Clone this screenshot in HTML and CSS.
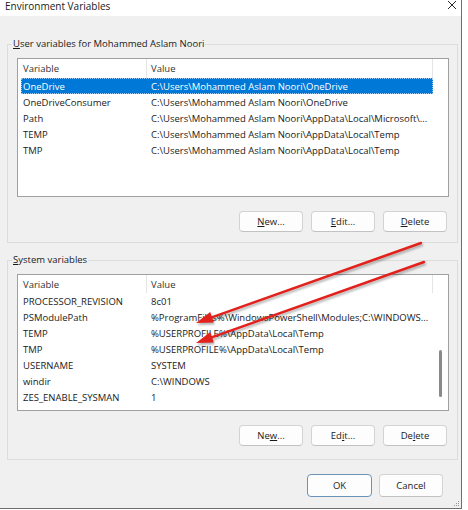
FILE: index.html
```html
<!DOCTYPE html>
<html>
<head>
<meta charset="utf-8">
<link rel="stylesheet" href="styles.css">
</head>
<body>
<div class="window">
  <div class="titlebar">
    <span class="title">Environment Variables</span>
    <svg class="close" viewBox="0 0 10 10" width="10" height="10"><path d="M1 1 L9 9 M9 1 L1 9" stroke="#2a2a2a" stroke-width="1" fill="none"/></svg>
  </div>
  <div class="client">
    <fieldset class="group group-user">
      <legend><u>U</u>ser variables for Mohammed Aslam Noori</legend>
      <div class="list list-user">
        <div class="rows">
          <div class="row head"><span class="c1">Variable</span><span class="c2">Value</span></div>
          <div class="row sel"><span class="c1">OneDrive</span><span class="c2">C:\Users\Mohammed Aslam Noori\OneDrive</span></div>
          <div class="row"><span class="c1">OneDriveConsumer</span><span class="c2">C:\Users\Mohammed Aslam Noori\OneDrive</span></div>
          <div class="row"><span class="c1">Path</span><span class="c2">C:\Users\Mohammed Aslam Noori\AppData\Local\Microsoft\...</span></div>
          <div class="row"><span class="c1">TEMP</span><span class="c2">C:\Users\Mohammed Aslam Noori\AppData\Local\Temp</span></div>
          <div class="row"><span class="c1">TMP</span><span class="c2">C:\Users\Mohammed Aslam Noori\AppData\Local\Temp</span></div>
        </div>
      </div>
      <div class="btns">
        <button class="btn"><u>N</u>ew...</button>
        <button class="btn"><u>E</u>dit...</button>
        <button class="btn"><u>D</u>elete</button>
      </div>
    </fieldset>
    <fieldset class="group group-sys">
      <legend><u>S</u>ystem variables</legend>
      <div class="list list-sys">
        <div class="rows">
          <div class="row head"><span class="c1">Variable</span><span class="c2">Value</span></div>
          <div class="row"><span class="c1">PROCESSOR_REVISION</span><span class="c2">8c01</span></div>
          <div class="row"><span class="c1">PSModulePath</span><span class="c2">%ProgramFiles%\WindowsPowerShell\Modules;C:\WINDOWS...</span></div>
          <div class="row"><span class="c1">TEMP</span><span class="c2">%USERPROFILE%\AppData\Local\Temp</span></div>
          <div class="row"><span class="c1">TMP</span><span class="c2">%USERPROFILE%\AppData\Local\Temp</span></div>
          <div class="row"><span class="c1">USERNAME</span><span class="c2">SYSTEM</span></div>
          <div class="row"><span class="c1">windir</span><span class="c2">C:\WINDOWS</span></div>
          <div class="row"><span class="c1">ZES_ENABLE_SYSMAN</span><span class="c2">1</span></div>
        </div>
        <div class="scroll"><div class="thumb"></div></div>
      </div>
      <div class="btns">
        <button class="btn">Ne<u>w</u>...</button>
        <button class="btn">Ed<u>i</u>t...</button>
        <button class="btn">De<u>l</u>ete</button>
      </div>
    </fieldset>
    <div class="footer">
      <button class="btn ok">OK</button>
      <button class="btn">Cancel</button>
    </div>
  </div>
  <svg class="arrows" viewBox="0 0 468 510" width="468" height="510">
    <g fill="#e3211c" stroke="#e3211c">
      <line x1="421" y1="243" x2="211" y2="317.6" stroke-width="2.4" stroke-linecap="round"/>
      <polygon points="196,323 213.8,322.5 210.2,312.1" stroke="none"/>
      <line x1="424" y1="262" x2="211" y2="337.6" stroke-width="2.4" stroke-linecap="round"/>
      <polygon points="196,343 213.8,342.5 210.2,332.1" stroke="none"/>
    </g>
  </svg>
  <svg class="grip" viewBox="0 0 6 6" width="6" height="6">
    <g fill="#9a9a9a"><rect x="4" y="0" width="1" height="1"/><rect x="2" y="2" width="1" height="1"/><rect x="4" y="2" width="1" height="1"/><rect x="0" y="4" width="1" height="1"/><rect x="2" y="4" width="1" height="1"/><rect x="4" y="4" width="1" height="1"/></g>
  </svg>
</div>
</body>
</html>
```

FILE: styles.css
```css
* { box-sizing: border-box; }

body {
  margin: 0;
  background: #ffffff;
  font-family: "Open Sans", "Noto Sans", sans-serif;
  font-size: 9.5px;
  color: #1a1a1a;
}

.window {
  position: relative;
  width: 462px;
  height: 509px;
  border-right: 1px solid #6f6f6f;
  border-bottom: 1px solid #6f6f6f;
  background: #f0f0f0;
  display: flex;
  flex-direction: column;
}

.titlebar {
  height: 16px;
  flex: none;
  background: #ffffff;
  display: flex;
  align-items: flex-start;
  justify-content: space-between;
  padding: 0 4px 0 5px;
}

.title {
  font-size: 10px;
  line-height: 12px;
}

.close {
  margin-top: 0;
}

.client {
  flex: 1;
  padding-top: 21px;
}

.group {
  margin: 0 0 0 7px;
  width: 451px;
  min-width: 0;
  border: 1px solid #dcdcdc;
  padding: 7px 8px 10px 9px;
}

.group legend {
  padding: 0 1px;
  margin-left: -5px;
  line-height: 14px;
}

.group-sys {
  margin-top: 10px;
  padding-bottom: 13px;
}

.list {
  background: #ffffff;
  border: 1px solid #a0a0a0;
  display: flex;
}

.list-user { height: 139px; }
.list-sys { height: 137px; }

.rows {
  flex: 1;
  min-width: 0;
  padding-left: 3px;
}

.row {
  display: flex;
  align-items: center;
  width: 412px;
  height: 16px;
  white-space: nowrap;
}

.row.head {
  height: 19px;
  align-items: stretch;
  color: #333333;
}

.list-sys .row.head {
  height: 18px;
}

.row.head .c1,
.row.head .c2 {
  display: flex;
  align-items: center;
  border-right: 1px solid #e5e5e5;
}

.c1 {
  flex: none;
  width: 126px;
  padding-left: 2px;
  overflow: hidden;
}

.c2 {
  flex: 1;
  min-width: 0;
  padding-left: 4px;
  overflow: hidden;
}

.row.sel {
  background: #0078d7;
  color: #ffffff;
  outline: 1px dotted #9cc9ef;
  outline-offset: -1px;
}

.scroll {
  flex: none;
  width: 15px;
  padding: 75px 0 0 6px;
}

.thumb {
  width: 3px;
  height: 47px;
  border-radius: 2px;
  background: #8a8a8a;
}

.btns {
  display: flex;
  justify-content: flex-end;
  gap: 8px;
  margin-top: 14px;
  padding-right: 2px;
}

.btn {
  width: 64px;
  height: 21px;
  padding: 0;
  font: inherit;
  color: #1a1a1a;
  background: #fdfdfd;
  border: 1px solid #d3d3d3;
  border-bottom-color: #c2c2c2;
  border-radius: 4px;
}

.btn u {
  text-underline-offset: 1px;
}

.footer {
  display: flex;
  justify-content: flex-end;
  gap: 7px;
  padding: 14px 18px 0 0;
}

.footer .btn {
  height: 23px;
}

.btn.ok {
  width: 65px;
  border: 1px solid #6b93b8;
}

.arrows {
  position: absolute;
  top: 0;
  left: 0;
  pointer-events: none;
  filter: drop-shadow(1px 2px 1px rgba(0, 0, 0, 0.3));
}

.grip {
  position: absolute;
  right: 1px;
  bottom: 1px;
}
```
